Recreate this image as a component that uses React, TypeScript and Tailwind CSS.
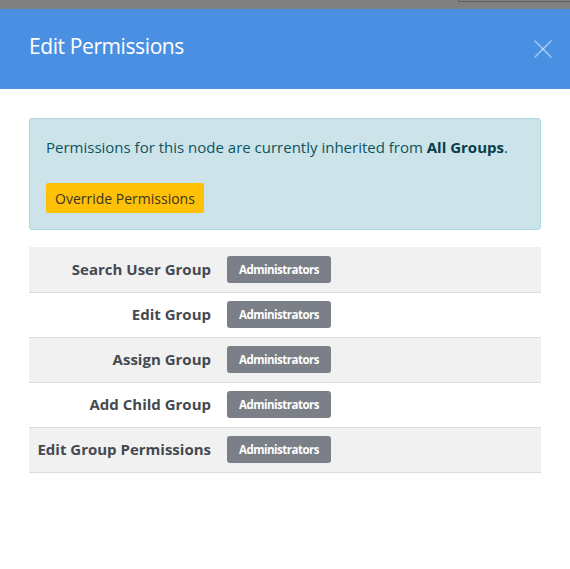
import { X } from "lucide-react";

const rows = [
  "Search User Group",
  "Edit Group",
  "Assign Group",
  "Add Child Group",
  "Edit Group Permissions",
];

export default function App() {
  return (
    <div className="min-h-[569px] w-full bg-white font-['Open_Sans',sans-serif]">
      {/* backdrop strip above the modal */}
      <div className="relative h-[9px] bg-[#808080]">
        <div className="absolute left-[458px] right-0 top-0 h-[2px] border-l border-b border-[#5f5f5f]" />
      </div>

      <div className="flex h-[80px] items-center justify-between bg-[#4a90e2] pl-[29px] pr-[11px] text-white">
        <h2 className="-mt-[5px] text-[21px] font-normal tracking-[-0.4px]">Edit Permissions</h2>
        <button className="text-white/50">
          <X className="h-8 w-8" strokeWidth={1.1} />
        </button>
      </div>

      <div className="px-[29px] pt-[29px]">
        <div className="rounded-[3px] border border-[#aed7e0] bg-[#cce3e9] px-4 pt-[14px] pb-4 text-[15px] text-[#0c5460]">
          <p className="leading-[28px]">
            Permissions for this node are currently inherited from{" "}
            <strong className="font-bold text-[#063e4a]">All Groups</strong>.
          </p>
          <button className="mt-[22px] flex h-[30px] items-center rounded-[2px] bg-[#ffc107] px-[9px] text-[14px] text-[#3a3420]">
            Override Permissions
          </button>
        </div>

        <table className="mt-[17px] w-full border-collapse">
          <tbody>
            {rows.map((label, i) => (
              <tr
                key={label}
                className={`h-[45px] border-b border-[#dcdcdc] ${i % 2 === 0 ? "bg-[#f1f1f1]" : "bg-white"}`}
              >
                <td className="w-[198px] pr-4 text-right text-[15px] font-bold text-[#444950]">
                  {label}
                </td>
                <td>
                  <span className="inline-flex h-[27px] w-[104px] items-center justify-center rounded-[3px] bg-[#7b7f87] text-[11.5px] font-bold tracking-[-0.5px] text-white">
                    Administrators
                  </span>
                </td>
              </tr>
            ))}
          </tbody>
        </table>
      </div>
    </div>
  );
}
